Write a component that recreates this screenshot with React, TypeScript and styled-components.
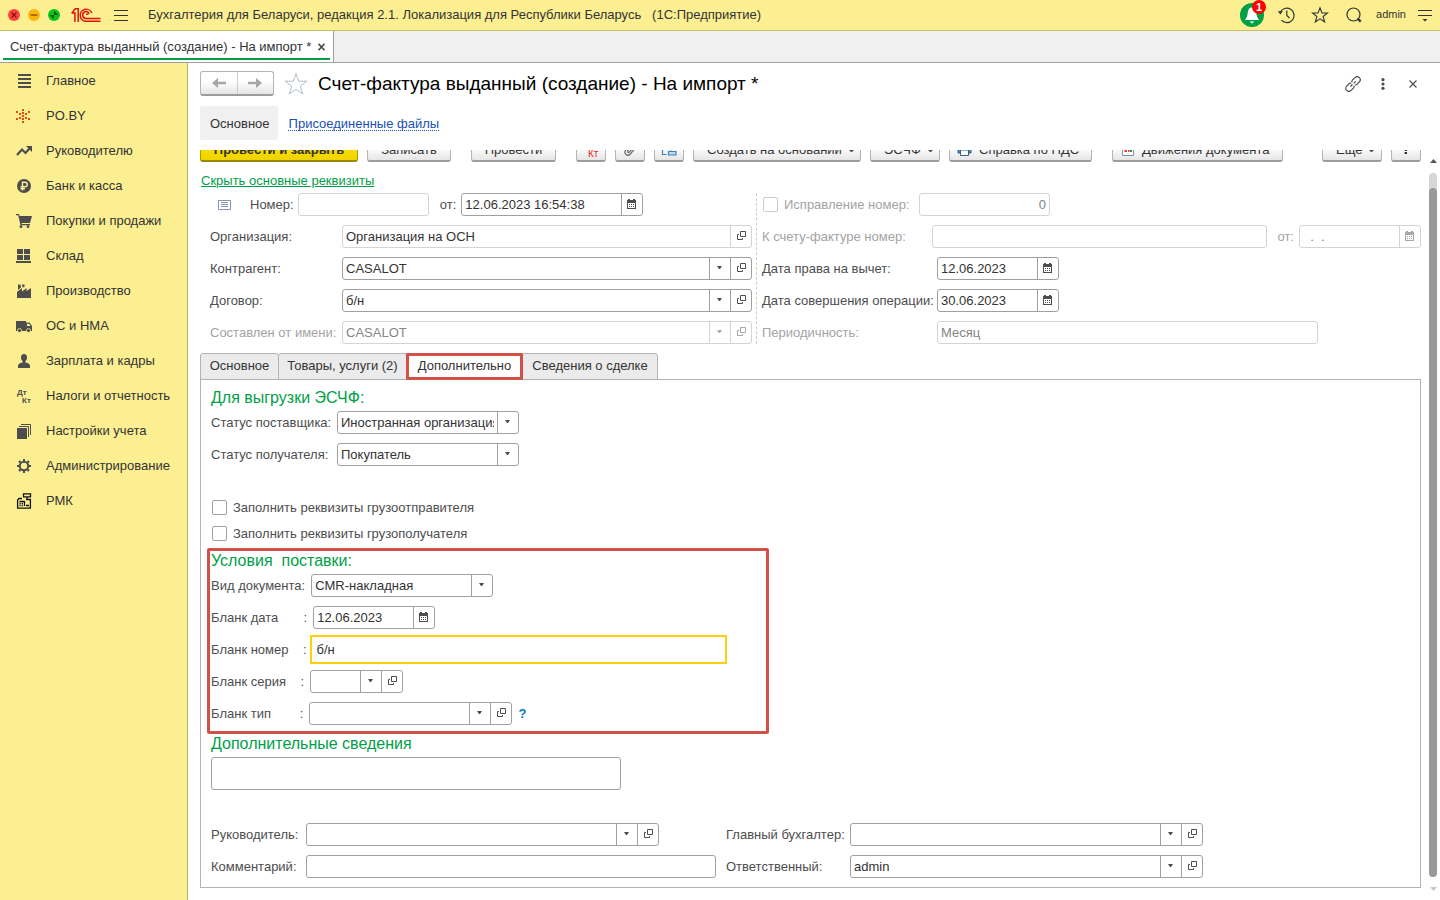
import React from "react";
import styled, { createGlobalStyle, css } from "styled-components";

const GlobalStyle = createGlobalStyle`
  *, *::before, *::after { box-sizing: border-box; }
  body { margin: 0; background: #fff; }
  body, button, input, select, textarea {
    font-family: "Liberation Sans", Arial, sans-serif;
    font-size: 13px;
    line-height: 15px;
    color: #333;
  }
  button { cursor: pointer; }
`;

const ink = "#4d4d4d";
const line = "#a0a0a0";
const faint = "#d4d4d4";
const green = "#009f48";
const red = "#d25045";
const yellow = "#fcef92";

/* ---------- window frame ---------- */

const Shell = styled.div`
  display: flex;
  flex-direction: column;
  min-height: 100vh;
`;

const TopBar = styled.header`
  display: flex;
  align-items: center;
  height: 31px;
  padding: 0 6px 0 8px;
  background: ${yellow};
  border-bottom: 1px solid #c8be62;
`;

const IconButton = styled.button<{ $w?: number }>`
  display: flex;
  align-items: center;
  justify-content: center;
  flex: none;
  width: ${(p) => p.$w ?? 24}px;
  height: 24px;
  padding: 0;
  border: 0;
  background: none;
  color: ${ink};
`;

const WindowControls = styled.div`
  display: flex;
  gap: 8px;
  margin-right: 11px;
  button { width: 12px; }
`;

const AppTitle = styled.div`
  flex: 1;
  margin-left: 7px;
  padding-bottom: 2px;
  white-space: pre;
`;

const TopTools = styled.div`
  display: flex;
  align-items: center;
  gap: 10px;
`;

const UserButton = styled.button`
  width: 30px;
  padding: 0 0 2px;
  border: 0;
  background: none;
  font-size: 11px;
`;

const BellWrap = styled.span`
  position: relative;
  display: flex;
`;

const Badge = styled.span`
  position: absolute;
  top: -3px;
  right: -2px;
  width: 14px;
  height: 14px;
  border-radius: 7px;
  background: #f00;
  color: #fff;
  font-size: 11px;
  font-weight: bold;
  line-height: 14px;
  text-align: center;
`;

const WindowTabs = styled.nav`
  display: flex;
  height: 32px;
  background: #f0f0f0;
  border-bottom: 1px solid ${line};
`;

const WindowTab = styled.div`
  display: flex;
  align-items: center;
  width: 334px;
  padding: 0 3px;
  background: #fff;
  border-right: 1px solid ${line};
`;

const WindowTabInner = styled.div`
  display: flex;
  flex: 1;
  align-items: center;
  justify-content: space-between;
  height: 29px;
  margin-top: -2px;
  padding: 4px 4px 0 7px;
  border-bottom: 2px solid ${green};
`;

const TabClose = styled.button`
  display: flex;
  padding: 0;
  border: 0;
  background: none;
`;

const Workspace = styled.div`
  display: flex;
  flex: 1;
`;

const Sidebar = styled.nav`
  flex: none;
  width: 188px;
  background: ${yellow};
  border-right: 1px solid #b5ad70;
`;

const SideLink = styled.a`
  display: flex;
  align-items: center;
  gap: 14px;
  height: 35px;
  padding-left: 16px;
  color: #333;
  text-decoration: none;
  white-space: nowrap;
  svg { flex: none; color: ${ink}; }
`;

const Main = styled.main`
  display: flex;
  flex: 1;
  flex-direction: column;
  min-width: 0;
`;

/* ---------- form header ---------- */

const FormHeader = styled.div`
  display: flex;
  align-items: center;
  height: 43px;
  padding: 0 15px 2px 12px;
`;

const raised = css`
  border: 1px solid #b4b4b4;
  border-bottom: 2px solid #9c9c9c;
  border-radius: 3px;
  background: linear-gradient(#fff, #fff 40%, #e6e6e6);
`;

const HistoryNav = styled.div`
  display: flex;
  width: 74px;
  height: 25px;
  ${raised}
  button {
    display: flex;
    flex: 1;
    align-items: center;
    justify-content: center;
    padding: 0;
    border: 0;
    background: none;
  }
  button + button { border-left: 1px solid #ccc; }
`;

const StarButton = styled(IconButton)`
  margin: 0 10px;
`;

const Title = styled.h1`
  flex: 1;
  margin: 0;
  color: #000;
  font-size: 19px;
  font-weight: normal;
  line-height: 22px;
`;

const HeaderTools = styled.div`
  display: flex;
  gap: 6px;
`;

const SectionNav = styled.nav`
  display: flex;
  align-items: center;
  gap: 11px;
  height: 34px;
  margin-bottom: 10px;
  padding-left: 12px;
`;

const SectionCurrent = styled.a`
  padding: 10px 8px 9px 10px;
  border-radius: 3px;
  background: #f0f0f0;
  color: #333;
  text-decoration: none;
`;

const SectionLink = styled.a`
  color: #1b4fb5;
  text-decoration: underline dotted 1px;
  text-decoration-skip-ink: none;
  text-underline-offset: 2px;
`;

const Body = styled.div`
  display: flex;
  flex: 1;
`;

const Form = styled.form`
  flex: 1;
  min-width: 0;
  padding: 0 0 12px 12px;
`;

/* The command bar is scrolled half out of view: only its lower part shows. */
const CommandBar = styled.div`
  display: flex;
  align-items: flex-end;
  justify-content: space-between;
  height: 12px;
  overflow: hidden;
`;

const CommandGroup = styled.div`
  display: flex;
  gap: 9px;
`;

const CommandSet = styled.div`
  display: flex;
  gap: 20px;
`;

const Command = styled.button<{ $w: number; $primary?: boolean; $pad?: number }>`
  display: flex;
  align-items: center;
  justify-content: ${(p) => (p.$pad ? "flex-start" : "center")};
  gap: 7px;
  flex: none;
  width: ${(p) => p.$w}px;
  height: 25px;
  padding: 0 0 0 ${(p) => p.$pad ?? 0}px;
  white-space: nowrap;
  ${raised}
  ${(p) =>
    p.$primary &&
    css`
      border-color: #b39b00;
      border-bottom-color: #9a8600;
      background: linear-gradient(#ffe600, #efd400);
      font-weight: bold;
    `}
`;

const HelpMark = styled.b`
  color: #111;
  font-size: 14px;
`;

const ToggleLink = styled.a`
  display: block;
  width: max-content;
  margin: 11px 0 5px 1px;
  color: ${green};
`;

/* ---------- fields ---------- */

const HeadFields = styled.div`
  display: flex;
  margin-bottom: 9px;
`;

const Stack = styled.div`
  display: flex;
  flex-direction: column;
  gap: 9px;
`;

const LeftFields = styled(Stack)`
  flex: none;
  width: 552px;
  padding-left: 10px;
`;

const RightFields = styled(Stack)`
  flex: 1;
  min-width: 0;
  margin-left: 4px;
  padding-left: 5px;
  border-left: 1px dashed #ccc;
`;

const Row = styled.div<{ $gap?: number }>`
  display: flex;
  align-items: center;
  gap: ${(p) => p.$gap ?? 0}px;
  height: 23px;
`;

const Label = styled.label<{ $w?: number; $muted?: boolean }>`
  flex: none;
  width: ${(p) => (p.$w ? `${p.$w}px` : "auto")};
  color: ${(p) => (p.$muted ? "#a3a3a3" : ink)};
  white-space: pre;
`;

const RecordMark = styled.span`
  display: flex;
  width: 40px;
  padding-left: 8px;
`;

type Tone = "normal" | "soft" | "muted";

const Box = styled.div<{ $w?: number; $tone: Tone }>`
  --edge: ${(p) => (p.$tone === "normal" ? line : faint)};
  display: flex;
  flex: ${(p) => (p.$w ? "none" : "1")};
  width: ${(p) => (p.$w ? `${p.$w}px` : "auto")};
  min-width: 0;
  height: 23px;
  border: 1px solid var(--edge);
  border-radius: 3px;
  background: #fff;
  color: ${(p) => (p.$tone === "muted" ? "#a8a8a8" : ink)};
`;

const Input = styled.input<{ $muted?: boolean; $right?: boolean }>`
  flex: 1;
  width: 0;
  min-width: 0;
  padding: 0 3px;
  border: 0;
  outline: 0;
  background: none;
  color: ${(p) => (p.$muted ? "#858585" : "#333")};
  text-align: ${(p) => (p.$right ? "right" : "left")};
`;

const Cell = styled.button`
  display: flex;
  align-items: flex-start;
  justify-content: center;
  flex: none;
  width: 21px;
  padding: 5px 1px 0 0;
  border: 0;
  border-left: 1px solid var(--edge);
  background: none;
  color: inherit;
`;

const FocusedInput = styled.input`
  width: 417px;
  height: 29px;
  margin: -3px;
  padding: 0 5px;
  border: 2px solid #fbd20a;
  outline: 0;
`;

const SelectBox = styled.div<{ $w: number }>`
  --edge: ${line};
  display: grid;
  grid-template-columns: 1fr 21px;
  width: ${(p) => p.$w}px;
  height: 23px;
  border: 1px solid var(--edge);
  border-radius: 3px;
  color: ${ink};
`;

const Select = styled.select`
  grid-area: 1 / 1 / 2 / 3;
  min-width: 0;
  padding: 0 24px 0 3px;
  border: 0;
  outline: 0;
  appearance: none;
  background: none;
`;

const SelectCaret = styled.span`
  grid-area: 1 / 2;
  display: flex;
  justify-content: center;
  padding: 5px 1px 0 0;
  border-left: 1px solid var(--edge);
  pointer-events: none;
`;

const Check = styled.input.attrs({ type: "checkbox" })`
  flex: none;
  width: 15px;
  height: 15px;
  margin: 0 6px 0 1px;
  border: 1px solid ${line};
  border-radius: 2px;
  appearance: none;
  background: #fff;
  &:disabled { border-color: #ccc; }
`;

/* ---------- page tabs and panel ---------- */

const PageTabs = styled.div`
  display: flex;
  height: 26px;
`;

const PageTab = styled.button<{ $w: number; $active?: boolean }>`
  position: relative;
  width: ${(p) => p.$w}px;
  height: 27px;
  margin-right: -1px;
  padding: 0 0 2px;
  border: 1px solid #b3b3b3;
  border-radius: 3px 3px 0 0;
  background: #ebebeb;
  white-space: nowrap;
  ${(p) =>
    p.$active &&
    css`
      z-index: 1;
      border: 3px solid ${red};
      border-radius: 1px;
      background: #fff;
    `}
`;

const Panel = styled.div`
  padding: 9px 10px;
  border: 1px solid #b3b3b3;
`;

const headingStyle = css`
  display: block;
  margin: 0 0 4px;
  color: ${green};
  font-size: 16px;
  font-weight: normal;
  line-height: 18px;
  white-space: pre;
`;

const Heading = styled.h2`
  ${headingStyle}
`;

const HeadingLabel = styled.label`
  ${headingStyle}
`;

const CheckList = styled.div`
  display: flex;
  flex-direction: column;
  gap: 11px;
  margin: 34px 0 7px;
`;

const CheckRow = styled.div`
  display: flex;
  align-items: center;
  height: 15px;
`;

const Highlight = styled.section`
  width: 562px;
  margin: 0 0 1px -4px;
  padding: 1px 1px 6px;
  border: 3px solid ${red};
  border-radius: 2px;
`;

const HelpButton = styled.button`
  padding: 0;
  border: 0;
  background: none;
  color: #0a78c2;
  font-size: 13px;
  font-weight: bold;
`;

const Notes = styled.textarea`
  display: block;
  width: 410px;
  height: 33px;
  margin-bottom: 33px;
  padding: 3px;
  border: 1px solid ${line};
  border-radius: 3px;
  outline: 0;
  resize: none;
`;

const Footer = styled.div`
  display: flex;
  gap: 10px;
`;

const FooterLeft = styled(Stack)`
  width: 505px;
`;

/* ---------- scroll bar ---------- */

const ScrollColumn = styled.div`
  display: flex;
  flex: none;
  flex-direction: column;
  align-items: center;
  width: 19px;
  padding: 8px 3px 8px 8px;
`;

const Track = styled.div`
  flex: 1;
  width: 8px;
  margin: 10px 0;
  padding-top: 15px;
  border-radius: 4px;
  background: #d6d6d6;
`;

const Thumb = styled.div`
  height: 100%;
  border-radius: 4px;
  background: #999;
`;

/* ---------- icons ---------- */

const Caret = () => (
  <svg width="5" height="10" viewBox="0 0 5 10" fill="currentColor" aria-hidden="true">
    <path d="M0 3h5L3 6H2z" />
  </svg>
);

const CommandCaret = () => (
  <svg width="5" height="10" viewBox="0 0 5 10" fill={ink} aria-hidden="true">
    <path d="M0 5h5v1L3 8H2L0 6z" />
  </svg>
);

const OpenIcon = () => (
  <svg width="11" height="10" viewBox="-2 0 11 10" fill="none" stroke="currentColor" aria-hidden="true">
    <path d="M3.5.5h5v5h-5zM2 3.5H.5v5h5V7" />
  </svg>
);

const CalendarIcon = () => (
  <svg width="9" height="10" viewBox="0 0 9 10" fill="currentColor" shapeRendering="crispEdges" aria-hidden="true">
    <path d="M0 1h1V0h2v1h3V0h2v1h1v9H0zM1 4v5h7V4zM2 5h1v1H2zM4 5h1v1H4zM6 5h1v1H6zM2 7h1v1H2zM4 7h1v1H4zM6 7h1v1H6z" fillRule="evenodd" />
  </svg>
);

const ScrollArrow = ({ down }: { down?: boolean }) => (
  <svg width="7" height="5" viewBox="0 0 7 5" aria-hidden="true">
    <path d={down ? "M0 0h7L3.5 4z" : "M0 5h7L3.5 1z"} fill={down ? "#c8c8c8" : "#555"} />
  </svg>
);

const Logo = () => (
  <svg width="30" height="16" viewBox="0 0 30 16" fill="none" stroke="#e3120b" strokeWidth="1.5" aria-label="1С">
    <path d="M.6 6.4 4.2 1.8H7.2V15M1.2 6H3.9V15M3.9 5V6.5" />
    <path d="M20.8 6A6 6 0 1 0 15.500 14.200H29.500" />
    <path d="M18.2 6.600A3.400 3.400 0 1 0 15.500 11.400H29.500" />
    <path d="M15 7.200h2.400" />
  </svg>
);

const side = {
  main: (
    <g shapeRendering="crispEdges" fill="currentColor">
      <path d="M2 1h13v2H2zM2 5h13v2H2zM2 9h13v2H2zM2 13h13v2H2z" />
    </g>
  ),
  po: (
    <g fill="#e8490a" shapeRendering="crispEdges">
      <path d="M6 1h2v2H6zM0 3h2v2H0zM12 3h2v2h-2zM6 4h2v2H6zM3 5h2v2H3zM9 5h2v2H9zM6 7h2v2H6zM3 9h2v2H3zM9 9h2v2H9zM0 10h2v2H0zM12 10h2v2h-2zM6 10h2v2H6zM6 13h2v2H6z" />
    </g>
  ),
  chart: (
    <g>
      <path d="M1 12 6 6.500l3.500 3.500L14 5" fill="none" stroke="currentColor" strokeWidth="2.200" />
      <path d="M10 3h6v6z" fill="currentColor" />
    </g>
  ),
  ruble: (
    <g>
      <circle cx="8" cy="8" r="7" fill="currentColor" />
      <path d="M6.500 12.500V4.300H9a2.200 2.200 0 0 1 0 4.400H4.500M4.500 10.700H9" fill="none" stroke={yellow} strokeWidth="1.400" />
    </g>
  ),
  cart: (
    <g fill="currentColor">
      <path d="M0 1h3l.7 2H16l-2 7H5.500l.3 1H14v1.200H4.500L2.200 2.200H0z" />
      <circle cx="5" cy="13.700" r="1.400" />
      <circle cx="12" cy="13.700" r="1.400" />
    </g>
  ),
  stock: (
    <g fill="currentColor" shapeRendering="crispEdges">
      <path d="M1 1h6v5H1zM8 1h6v5H8zM1 7h6v5H1zM8 7h6v5H8zM0 13h15v2H0z" />
    </g>
  ),
  factory: (
    <g fill="currentColor">
      <path d="M1 15V9l5-4v3.500L10.500 5v3L15 5v10zM2 1.500h2.500L5 4.500 2 7zM6 1.500h2.500V4L6.500 4.500z" />
    </g>
  ),
  truck: (
    <g fill="currentColor">
      <path fillRule="evenodd" d="M0 3h10v1.500h3.500L16 8v5H0zM11 5.800V8h3.600L13 5.800z" />
      <circle cx="3.500" cy="12.500" r="2" stroke={yellow} strokeWidth=".8" />
      <circle cx="12.500" cy="12.500" r="2" stroke={yellow} strokeWidth=".8" />
    </g>
  ),
  person: (
    <g fill="currentColor">
      <ellipse cx="8" cy="4.500" rx="3" ry="3.500" />
      <path d="M6.500 7h3v2.500c3 .5 4.500 1.500 4.500 3.500v2H2v-2c0-2 1.500-3 4.500-3.500z" />
    </g>
  ),
  books: (
    <g>
      <path d="M1 5h10v11H1z" fill="currentColor" />
      <path d="M3 3.500h9.500V14M5 1.500h9.500V12" fill="none" stroke="currentColor" />
    </g>
  ),
  gear: (
    <g fill="none" stroke="currentColor">
      <circle cx="8" cy="8" r="4.200" strokeWidth="2" />
      <path d="M8 1v2.500M8 12.500V15M1 8h2.500M12.500 8H15M3 3l2 2M11 11l2 2M13 3l-2 2M5 11l-2 2" strokeWidth="2" />
    </g>
  ),
  till: (
    <g fill="none" stroke="#111" strokeWidth="1.300">
      <path d="M7.500.8h7v3h-7zM11 4v2M6 5.500H3L1.600 7v8.200h12.800V6.500H10" />
      <path d="M3.500 8.500h5M3.500 10.500h1.200M5.700 10.500h1.200M3.500 12.500h1.200M5.700 12.500h1.200M8.500 8v5M10 12.500h3" />
    </g>
  ),
};

const DtKt = () => (
  <svg width="16" height="16" viewBox="0 0 16 16" fill="currentColor" fontSize="8" fontWeight="bold" aria-hidden="true">
    <text x="1" y="7">Дт</text>
    <text x="6" y="15">Кт</text>
  </svg>
);

const menu: { name: string; icon: keyof typeof side | "dtkt" }[] = [
  { name: "Главное", icon: "main" },
  { name: "PO.BY", icon: "po" },
  { name: "Руководителю", icon: "chart" },
  { name: "Банк и касса", icon: "ruble" },
  { name: "Покупки и продажи", icon: "cart" },
  { name: "Склад", icon: "stock" },
  { name: "Производство", icon: "factory" },
  { name: "ОС и НМА", icon: "truck" },
  { name: "Зарплата и кадры", icon: "person" },
  { name: "Налоги и отчетность", icon: "dtkt" },
  { name: "Настройки учета", icon: "books" },
  { name: "Администрирование", icon: "gear" },
  { name: "РМК", icon: "till" },
];

/* ---------- field parts ---------- */

type FieldProps = {
  id: string;
  value?: string;
  w?: number;
  tone?: Tone;
  drop?: boolean;
  open?: boolean;
  date?: boolean;
  right?: boolean;
};

const Field = ({ id, value = "", w, tone = "normal", drop, open, date, right }: FieldProps) => {
  const off = tone === "muted";
  return (
    <Box $w={w} $tone={tone}>
      <Input id={id} defaultValue={value} $muted={off} $right={right} disabled={off} />
      {drop && <Cell type="button" aria-label="Выбрать" disabled={off}><Caret /></Cell>}
      {date && <Cell type="button" aria-label="Календарь" disabled={off}><CalendarIcon /></Cell>}
      {open && <Cell type="button" aria-label="Открыть" disabled={off}><OpenIcon /></Cell>}
    </Box>
  );
};

const Choice = ({ id, value }: { id: string; value: string }) => (
  <SelectBox $w={182}>
    <Select id={id} defaultValue={value}>
      <option>{value}</option>
    </Select>
    <SelectCaret><Caret /></SelectCaret>
  </SelectBox>
);

export default function App() {
  return (
    <Shell>
      <GlobalStyle />
      <TopBar>
        <WindowControls>
          <IconButton aria-label="Закрыть окно">
            <svg width="12" height="12" viewBox="0 0 12 12">
              <circle cx="6" cy="6" r="6" fill="#fb4640" />
              <path d="m3.500 3.500 5 5m0-5-5 5" stroke="#8f0f0b" strokeWidth="1.200" />
            </svg>
          </IconButton>
          <IconButton aria-label="Свернуть окно">
            <svg width="12" height="12" viewBox="0 0 12 12">
              <circle cx="6" cy="6" r="6" fill="#fdb40b" />
              <path d="M2.500 6h7" stroke="#a86400" strokeWidth="1.800" />
            </svg>
          </IconButton>
          <IconButton aria-label="Развернуть окно">
            <svg width="12" height="12" viewBox="0 0 12 12">
              <circle cx="6" cy="6" r="6" fill="#0bc41c" />
              <path d="M6 1.500v4.500h4.500zM6 10.500V6H1.500z" fill="#045c0b" />
            </svg>
          </IconButton>
        </WindowControls>
        <Logo />
        <IconButton $w={40} aria-label="Главное меню">
          <svg width="14" height="11" viewBox="0 0 14 11" stroke="#333">
            <path d="M0 .5h14M0 5.500h14M0 10.500h14" />
          </svg>
        </IconButton>
        <AppTitle>{"Бухгалтерия для Беларуси, редакция 2.1. Локализация для Республики Беларусь   (1С:Предприятие)"}</AppTitle>
        <TopTools>
          <IconButton aria-label="Уведомления">
            <BellWrap>
              <svg width="24" height="24" viewBox="0 0 24 24">
                <circle cx="12" cy="12" r="12" fill="#00a046" />
                <path d="M12 4.500c-3 0-4 2.500-4.300 5.500-.3 3-1 4.500-2.700 7h14c-1.700-2.500-2.400-4-2.700-7C16 7 15 4.500 12 4.500zM9.500 18.500h5L12 20.500z" fill="#fff" />
              </svg>
              <Badge>1</Badge>
            </BellWrap>
          </IconButton>
          <IconButton aria-label="История">
            <svg width="18" height="18" viewBox="0 0 18 18" fill="none" stroke="#333" strokeWidth="1.200">
              <path d="M3.300 6.500A7.200 7.200 0 1 1 4.500 14.200M9.800 4.500v5l2.700 2.500" />
              <path d="M.8 5.200h5L3.300 8.500z" fill="#333" stroke="none" />
            </svg>
          </IconButton>
          <IconButton aria-label="Избранное">
            <svg width="18" height="18" viewBox="0 0 18 18" fill="none" stroke="#333" strokeWidth="1.100">
              <path d="m9 1.800 2 5.200h5.500l-4.400 3.500 1.600 5.500L9 12.800 4.300 16l1.600-5.500L1.500 7H7z" />
            </svg>
          </IconButton>
          <IconButton aria-label="Поиск">
            <svg width="18" height="18" viewBox="0 0 18 18" fill="none" stroke="#333" strokeWidth="1.200">
              <circle cx="8.500" cy="8.500" r="6.500" />
              <path d="m12.500 12.500 3.200 3.200" strokeWidth="2.400" />
            </svg>
          </IconButton>
          <UserButton>admin</UserButton>
          <IconButton $w={18} aria-label="Сервис">
            <svg width="14" height="13" viewBox="0 0 14 13" stroke="#333" fill="#333">
              <path d="M0 1.500h14M0 6.500h14" />
              <path d="M4.500 10h5L7 12.500z" stroke="none" />
            </svg>
          </IconButton>
        </TopTools>
      </TopBar>

      <WindowTabs>
        <WindowTab>
          <WindowTabInner>
            <span>Счет-фактура выданный (создание) - На импорт *</span>
            <TabClose aria-label="Закрыть вкладку">
              <svg width="9" height="8" viewBox="0 0 9 8" stroke="#444" strokeWidth="1.600">
                <path d="m1.500.800 6 6.400M7.500.800l-6 6.400" />
              </svg>
            </TabClose>
          </WindowTabInner>
        </WindowTab>
      </WindowTabs>

      <Workspace>
        <Sidebar>
          {menu.map((m) => (
            <SideLink href="#" key={m.name}>
              {m.icon === "dtkt" ? (
                <DtKt />
              ) : (
                <svg width="16" height="16" viewBox="0 0 16 16" aria-hidden="true">{side[m.icon]}</svg>
              )}
              {m.name}
            </SideLink>
          ))}
        </Sidebar>

        <Main>
          <FormHeader>
            <HistoryNav>
              <button type="button" aria-label="Назад">
                <svg width="14" height="10" viewBox="0 0 14 10" fill="#a6a6a6">
                  <path d="M0 5 6 0v3.700h8v2.600H6V10z" />
                </svg>
              </button>
              <button type="button" aria-label="Вперед">
                <svg width="14" height="10" viewBox="0 0 14 10" fill="#a6a6a6">
                  <path d="M14 5 8 0v3.700H0v2.600h8V10z" />
                </svg>
              </button>
            </HistoryNav>
            <StarButton type="button" aria-label="В избранное">
              <svg width="24" height="24" viewBox="0 0 24 24" fill="#fff" stroke="#b4bcc6">
                <path d="m12 1.500 2.700 7.700h8.100l-6.500 4.900 2.500 8L12 17.300l-6.800 4.800 2.500-8L1.200 9.200h8.100z" />
              </svg>
            </StarButton>
            <Title>Счет-фактура выданный (создание) - На импорт *</Title>
            <HeaderTools>
              <IconButton aria-label="Ссылка">
                <svg width="16" height="16" viewBox="0 0 16 16" fill="none" stroke={ink} strokeWidth="1.200">
                  <path d="M6.700 6.200 7.300 4 10 1.600a3 3 0 0 1 4.300 4.300L11.800 8.500 9.700 9.200M9.300 9.800 8.700 12 6 14.400a3 3 0 0 1-4.300-4.300L4.200 7.500 6.300 6.800M5.500 10.500l2-2M8.700 7.300l2-2" />
                </svg>
              </IconButton>
              <IconButton aria-label="Дополнительно">
                <svg width="4" height="12" viewBox="0 0 4 12" fill={ink}>
                  <circle cx="2" cy="1.700" r="1.600" /><circle cx="2" cy="6" r="1.600" /><circle cx="2" cy="10.300" r="1.600" />
                </svg>
              </IconButton>
              <IconButton aria-label="Закрыть">
                <svg width="8" height="8" viewBox="0 0 8 8" stroke={ink} strokeWidth="1.100">
                  <path d="m.5.5 7 7m0-7-7 7" />
                </svg>
              </IconButton>
            </HeaderTools>
          </FormHeader>

          <SectionNav>
            <SectionCurrent href="#">Основное</SectionCurrent>
            <SectionLink href="#">Присоединенные файлы</SectionLink>
          </SectionNav>

          <Body>
            <Form onSubmit={(e) => e.preventDefault()}>
              <CommandBar>
                <CommandSet>
                  <CommandGroup>
                    <Command type="button" $w={158} $primary>Провести и закрыть</Command>
                    <Command type="button" $w={84}>Записать</Command>
                  </CommandGroup>
                  <Command type="button" $w={85}>Провести</Command>
                  <CommandGroup>
                    <Command type="button" $w={30} aria-label="Проводки">
                      <svg width="18" height="20" viewBox="0 0 18 20" fontSize="10" fontWeight="bold">
                        <text x="0" y="8" fill="#3b7fb5">Дт</text>
                        <text x="6" y="18" fill="#ec1c24" fontWeight="normal">Кт</text>
                      </svg>
                    </Command>
                    <Command type="button" $w={30} aria-label="Вложения">
                      <svg width="16" height="16" viewBox="0 0 16 16" fill="none" stroke="#666" strokeWidth="1.200">
                        <path d="m13.500 7-5.500 6.300a3 3 0 0 1-4.600-3.800L9.500 2.500a2 2 0 0 1 3 2.600L7.500 11a1 1 0 0 1-1.700-1.200L10 5" />
                      </svg>
                    </Command>
                    <Command type="button" $w={30} aria-label="Структура подчиненности">
                      <svg width="16" height="16" viewBox="0 0 16 16" fill="none" stroke="#3b86b5" strokeWidth="1.200">
                        <path d="M1.500 1.500h6v4h-6zM1.500 5.500v8h4M10 5.500v4" />
                        <path d="M7.500 10.500h7.500v3.500H7.500z" fill="#bcdcee" />
                      </svg>
                    </Command>
                    <Command type="button" $w={168} $pad={13}>Создать на основании <CommandCaret /></Command>
                    <Command type="button" $w={70} $pad={13}>ЭСЧФ <CommandCaret /></Command>
                    <Command type="button" $w={143} $pad={7}>
                      <svg width="15" height="16" viewBox="0 0 15 16">
                        <path d="M3 1h9v4H3z" fill="#fff" stroke="#3a6a9a" />
                        <path d="M1 4h13v8H1z" fill="#4d86bb" stroke="#2f5f8f" />
                        <path d="M3.500 9h8v5.500h-8z" fill="#fff" stroke="#2f5f8f" />
                      </svg>
                      Справка по НДС
                    </Command>
                  </CommandGroup>
                  <Command type="button" $w={171} $pad={8}>
                    <svg width="14" height="16" viewBox="0 0 14 16">
                      <path d="M1.500.5h11v14h-11z" fill="#fff" stroke="#7d93a8" />
                      <path d="M3.500 8H6v3H3.500z" fill="#e33" /><path d="M7 7h1.500v4H7z" fill="#e33" /><path d="M9 8h2v3H9z" fill="#1a9a3a" />
                    </svg>
                    Движения документа
                  </Command>
                </CommandSet>
                <CommandGroup>
                  <Command type="button" $w={60} $pad={13}>Еще <CommandCaret /></Command>
                  <Command type="button" $w={30}><HelpMark>?</HelpMark></Command>
                </CommandGroup>
              </CommandBar>

              <ToggleLink href="#">Скрыть основные реквизиты</ToggleLink>

              <HeadFields>
                <LeftFields>
                  <Row>
                    <RecordMark>
                      <svg width="13" height="10" viewBox="0 0 13 10" fill="none" stroke="#8296b0">
                        <path d="M.5.5h12v9H.5z" />
                        <path d="M3 2.500h7M3 4.500h7M3 6.500h7" />
                      </svg>
                    </RecordMark>
                    <Label htmlFor="number" $w={48}>Номер:</Label>
                    <Field id="number" w={131} tone="soft" />
                    <Row $gap={5}>
                      <Label htmlFor="date">{"   от:"}</Label>
                      <Field id="date" w={182} value="12.06.2023 16:54:38" date />
                    </Row>
                  </Row>
                  <Row>
                    <Label htmlFor="org" $w={132}>Организация:</Label>
                    <Field id="org" value="Организация на ОСН" tone="soft" open />
                  </Row>
                  <Row>
                    <Label htmlFor="partner" $w={132}>Контрагент:</Label>
                    <Field id="partner" value="CASALOT" drop open />
                  </Row>
                  <Row>
                    <Label htmlFor="contract" $w={132}>Договор:</Label>
                    <Field id="contract" value="б/н" drop open />
                  </Row>
                  <Row>
                    <Label htmlFor="behalf" $w={132} $muted>Составлен от имени:</Label>
                    <Field id="behalf" value="CASALOT" tone="muted" drop open />
                  </Row>
                </LeftFields>
                <RightFields>
                  <Row>
                    <Check id="fix" disabled />
                    <Label htmlFor="fix" $w={135} $muted>Исправление номер:</Label>
                    <Field id="fixNumber" w={131} value="0" tone="muted" right />
                  </Row>
                  <Row>
                    <Label htmlFor="invoice" $w={170} $muted>К счету-фактуре номер:</Label>
                    <Field id="invoice" tone="muted" />
                    <Row $gap={5}>
                      <Label htmlFor="invoiceDate" $muted>{"   от:"}</Label>
                      <Field id="invoiceDate" w={122} value="  .  ." tone="muted" date />
                    </Row>
                  </Row>
                  <Row>
                    <Label htmlFor="deduct" $w={175}>Дата права на вычет:</Label>
                    <Field id="deduct" w={122} value="12.06.2023" date />
                  </Row>
                  <Row>
                    <Label htmlFor="operation" $w={175}>Дата совершения операции:</Label>
                    <Field id="operation" w={122} value="30.06.2023" date />
                  </Row>
                  <Row>
                    <Label htmlFor="period" $w={175} $muted>Периодичность:</Label>
                    <Field id="period" w={381} value="Месяц" tone="muted" />
                  </Row>
                </RightFields>
              </HeadFields>

              <PageTabs role="tablist">
                <PageTab type="button" role="tab" $w={79}>Основное</PageTab>
                <PageTab type="button" role="tab" $w={129}>Товары, услуги (2)</PageTab>
                <PageTab type="button" role="tab" $w={117} $active aria-selected>Дополнительно</PageTab>
                <PageTab type="button" role="tab" $w={136}>Сведения о сделке</PageTab>
              </PageTabs>

              <Panel role="tabpanel">
                <Heading>Для выгрузки ЭСЧФ:</Heading>
                <Stack>
                  <Row>
                    <Label htmlFor="supplier" $w={126}>Статус поставщика:</Label>
                    <Choice id="supplier" value="Иностранная организация" />
                  </Row>
                  <Row>
                    <Label htmlFor="receiver" $w={126}>Статус получателя:</Label>
                    <Choice id="receiver" value="Покупатель" />
                  </Row>
                </Stack>
                <CheckList>
                  <CheckRow>
                    <Check id="sender" />
                    <Label htmlFor="sender">Заполнить реквизиты грузоотправителя</Label>
                  </CheckRow>
                  <CheckRow>
                    <Check id="consignee" />
                    <Label htmlFor="consignee">Заполнить реквизиты грузополучателя</Label>
                  </CheckRow>
                </CheckList>

                <Highlight>
                  <Heading>{"Условия  поставки:"}</Heading>
                  <Stack>
                    <Row $gap={6}>
                      <Label htmlFor="docKind">Вид документа:</Label>
                      <Choice id="docKind" value="CMR-накладная" />
                    </Row>
                    <Row $gap={6}>
                      <Label htmlFor="blankDate">{"Бланк дата       :"}</Label>
                      <Field id="blankDate" w={122} value="12.06.2023" date />
                    </Row>
                    <Row $gap={6}>
                      <Label htmlFor="blankNumber">{"Бланк номер    :"}</Label>
                      <FocusedInput id="blankNumber" defaultValue="б/н" />
                    </Row>
                    <Row $gap={6}>
                      <Label htmlFor="blankSeries">{"Бланк серия    :"}</Label>
                      <Field id="blankSeries" w={93} drop open />
                    </Row>
                    <Row $gap={6}>
                      <Label htmlFor="blankType">{"Бланк тип        :"}</Label>
                      <Field id="blankType" w={203} drop open />
                      <HelpButton type="button">?</HelpButton>
                    </Row>
                  </Stack>
                </Highlight>

                <HeadingLabel htmlFor="notes">Дополнительные сведения</HeadingLabel>
                <Notes id="notes" />

                <Footer>
                  <FooterLeft>
                    <Row>
                      <Label htmlFor="head" $w={95}>Руководитель:</Label>
                      <Field id="head" w={353} drop open />
                    </Row>
                    <Row>
                      <Label htmlFor="comment" $w={95}>Комментарий:</Label>
                      <Field id="comment" w={410} />
                    </Row>
                  </FooterLeft>
                  <Stack>
                    <Row>
                      <Label htmlFor="accountant" $w={124}>Главный бухгалтер:</Label>
                      <Field id="accountant" w={353} drop open />
                    </Row>
                    <Row>
                      <Label htmlFor="responsible" $w={124}>Ответственный:</Label>
                      <Field id="responsible" w={353} value="admin" drop open />
                    </Row>
                  </Stack>
                </Footer>
              </Panel>
            </Form>

            <ScrollColumn>
              <ScrollArrow />
              <Track><Thumb /></Track>
              <ScrollArrow down />
            </ScrollColumn>
          </Body>
        </Main>
      </Workspace>
    </Shell>
  );
}
